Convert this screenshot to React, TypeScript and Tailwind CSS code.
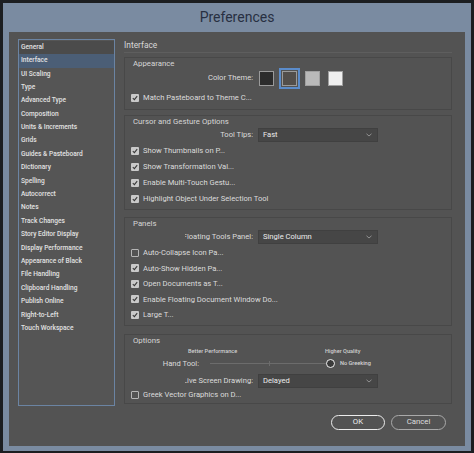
import React from "react";

const sections = [
  "General",
  "Interface",
  "UI Scaling",
  "Type",
  "Advanced Type",
  "Composition",
  "Units & Increments",
  "Grids",
  "Guides & Pasteboard",
  "Dictionary",
  "Spelling",
  "Autocorrect",
  "Notes",
  "Track Changes",
  "Story Editor Display",
  "Display Performance",
  "Appearance of Black",
  "File Handling",
  "Clipboard Handling",
  "Publish Online",
  "Right-to-Left",
  "Touch Workspace",
];

function Check({ checked, label, h = "h-[16px]" }: { checked: boolean; label: string; h?: string }) {
  return (
    <div className={`flex items-center pl-[6px] ${h}`}>
      {checked ? (
        <span className="w-[8px] h-[8px] bg-[#c9c9c9] rounded-[1px] flex items-center justify-center">
          <svg width="6" height="6" viewBox="0 0 6 6">
            <path d="M0.8 3.1 L2.4 4.6 L5.2 1.2" fill="none" stroke="#3a3a3a" strokeWidth="1.1" />
          </svg>
        </span>
      ) : (
        <span className="w-[8px] h-[8px] border border-[#b5b5b5] rounded-[1px]" />
      )}
      <span className="ml-[4px] text-[7.6px] text-[#dcdcdc] whitespace-nowrap">{label}</span>
    </div>
  );
}

// right-aligned label that gets clipped on its left edge, like the dialog does
function Label({ text }: { text: string }) {
  return (
    <div className="ml-[60px] w-[68px] overflow-hidden flex justify-end">
      <span className="shrink-0 whitespace-nowrap text-[7.6px] text-[#dcdcdc]">{text}</span>
    </div>
  );
}

function Select({ value }: { value: string }) {
  return (
    <div className="ml-[5px] w-[120px] h-[14px] bg-[#464646] border border-[#404040] flex items-center justify-between pl-[4px] pr-[5px]">
      <span className="text-[7.6px] text-[#ececec]">{value}</span>
      <svg width="6" height="4" viewBox="0 0 6 4">
        <path d="M0.5 0.8 L3 3 L5.5 0.8" fill="none" stroke="#9a9a9a" strokeWidth="0.9" />
      </svg>
    </div>
  );
}

function Group({ title, className, children }: { title: string; className: string; children: React.ReactNode }) {
  return (
    <div className={`border border-[#484848] ${className}`}>
      <div className="h-[12px] flex items-center pl-[8px] text-[7.8px] text-[#d6d6d6]">{title}</div>
      {children}
    </div>
  );
}

export default function App() {
  return (
    <div className="w-[474px] h-[453px] bg-[#1c1e21] pt-[3px] pl-[3px] overflow-hidden font-[Roboto,sans-serif]">
      <div className="w-[468px] h-[448px] bg-[#7a8ba1] flex flex-col">
        <div className="h-[29px] flex items-center justify-center text-[14px] text-[#283042]">Preferences</div>
        <div className="mx-[6px] mb-[5px] flex-1 bg-[#535353] pt-[7px] pl-[9px] pr-[13px] flex">
          <div className="w-[97px] h-[367px] border border-[#6b84a3] bg-[#555555] pt-px">
            {sections.map((s, i) => (
              <div
                key={s}
                className={`h-[13.4px] flex items-center pl-[2px] text-[6.6px] font-medium text-[#e2e2e2] whitespace-nowrap ${
                  i === 1 ? "bg-[#4b5e76]" : i === 0 ? "bg-[#4b4b4b]" : ""
                }`}
              >
                {s}
              </div>
            ))}
          </div>

          <div className="ml-[9px] w-[328px] flex flex-col">
            <div className="h-[14px] flex items-center text-[8.4px] text-[#d8d8d8] border-b border-[#5e5e5e]">
              Interface
            </div>

            <Group title="Appearance" className="mt-[4px] pb-[3px]">
              <div className="h-[16px] flex items-center">
                <Label text="Color Theme:" />
                <div className="ml-[6px] flex items-center gap-[8px]">
                  <span className="w-[15px] h-[15px] bg-[#2c2c2c] border border-[#9a9a9a]" />
                  <span className="w-[15px] h-[15px] bg-[#524e4b] border border-[#9a9a9a] outline-2 outline-offset-[1px] outline-[#5b8ccb]" />
                  <span className="w-[15px] h-[15px] bg-[#b9b9b9] border border-[#a0a0a0]" />
                  <span className="w-[15px] h-[15px] bg-[#efefef] border border-[#a0a0a0]" />
                </div>
              </div>
              <div className="mt-[4px]">
                <Check checked label="Match Pasteboard to Theme C..." />
              </div>
            </Group>

            <Group title="Cursor and Gesture Options" className="mt-[5px] pb-[2px]">
              <div className="h-[14px] flex items-center">
                <Label text="Tool Tips:" />
                <Select value="Fast" />
              </div>
              <div className="mt-px">
                <Check checked label="Show Thumbnails on P..." />
                <Check checked label="Show Transformation Val..." />
                <Check checked label="Enable Multi-Touch Gestu..." />
                <Check checked label="Highlight Object Under Selection Tool" />
              </div>
            </Group>

            <Group title="Panels" className="mt-[7px] pb-[2px]">
              <div className="h-[14px] flex items-center">
                <Label text="Floating Tools Panel:" />
                <Select value="Single Column" />
              </div>
              <div className="mt-px">
                <Check checked={false} h="h-[15.5px]" label="Auto-Collapse Icon Pa..." />
                <Check checked h="h-[15.5px]" label="Auto-Show Hidden Pa..." />
                <Check checked h="h-[15.5px]" label="Open Documents as T..." />
                <Check checked h="h-[15.5px]" label="Enable Floating Document Window Do..." />
                <Check checked h="h-[15.5px]" label="Large T..." />
              </div>
            </Group>

            <Group title="Options" className="mt-[8px]">
              <div className="h-[10px] flex items-center text-[5.6px] font-medium text-[#d0d0d0]">
                <span className="ml-[63px] w-[137px]">Better Performance</span>
                <span>Higher Quality</span>
              </div>
              <div className="h-[14px] flex items-center">
                <span className="w-[74px] text-right text-[7.6px] text-[#dcdcdc]">Hand Tool:</span>
                <div className="ml-[11px] w-[120px] h-px bg-[#6c6c6c] relative">
                  <span className="absolute left-[59px] -top-[2px] w-px h-[5px] bg-[#6c6c6c]" />
                  <span className="absolute -right-[5px] -top-[4px] w-[9px] h-[9px] rounded-full border-[1.5px] border-[#f2f2f2] bg-[#3a3a3a]" />
                </div>
                <span className="ml-[10px] text-[5.6px] font-medium text-[#d6d6d6]">No Greeking</span>
              </div>
              <div className="mt-[3px] h-[14px] flex items-center">
                <Label text="Live Screen Drawing:" />
                <Select value="Delayed" />
              </div>
              <Check checked={false} h="h-[15px]" label="Greek Vector Graphics on D..." />
            </Group>

            <div className="mt-[11px] mr-[6px] flex justify-end gap-[6px]">
              <div className="w-[54px] h-[15px] rounded-full border-[1.5px] border-[#ececec] flex items-center justify-center text-[7.8px] text-[#eeeeee]">
                OK
              </div>
              <div className="w-[55px] h-[15px] rounded-full border-[1.5px] border-[#a9a9a9] flex items-center justify-center text-[7.8px] text-[#dedede]">
                Cancel
              </div>
            </div>
          </div>
        </div>
      </div>
    </div>
  );
}
